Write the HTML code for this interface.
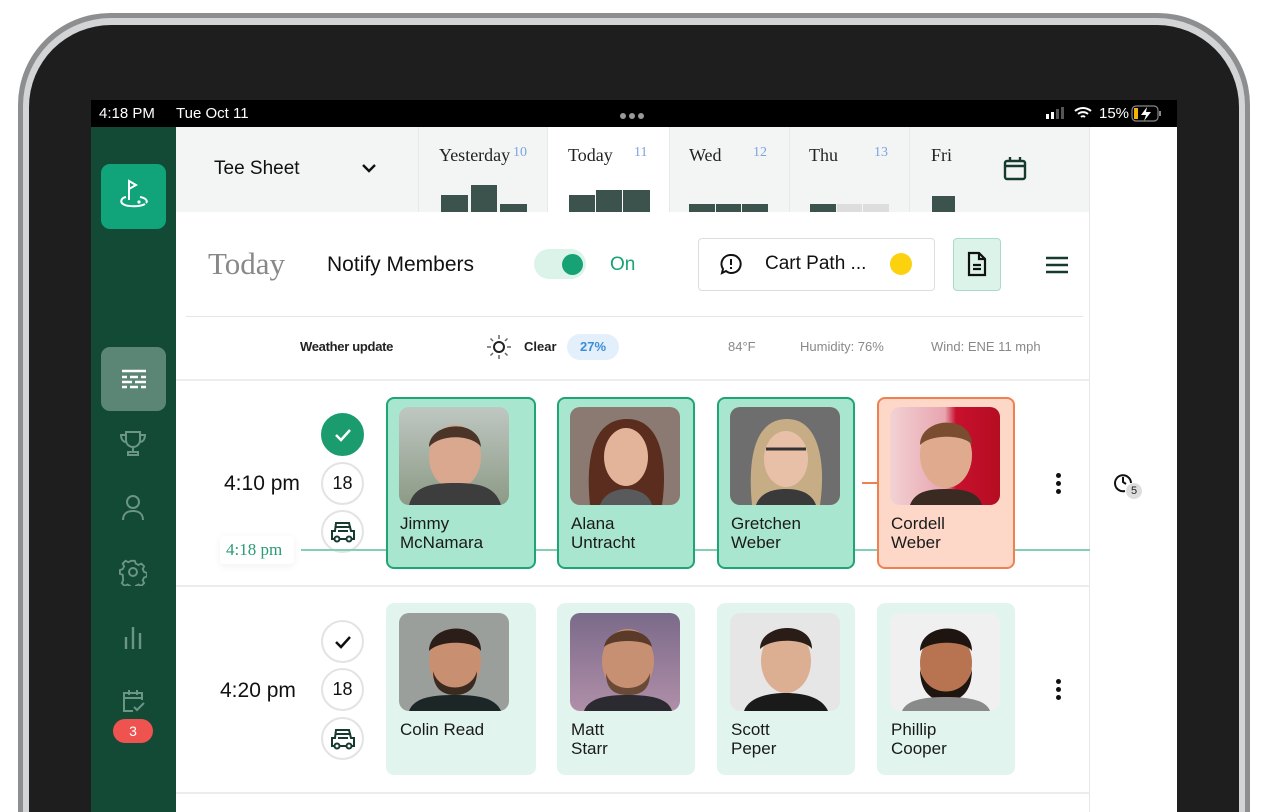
<!DOCTYPE html>
<html style="overflow:hidden;width:1262px;height:812px"><head><meta charset="utf-8">
<style>
*{margin:0;padding:0;box-sizing:border-box}
body{width:1262px;height:812px;overflow:hidden;background:#fff;font-family:"Liberation Sans",sans-serif;position:relative}
#wrap{position:absolute;left:0;top:0;width:1262px;height:812px;overflow:hidden}
.a{position:absolute}
.serif{font-family:"Liberation Serif",serif}
.tab{position:absolute;top:127px;height:85px;border-right:1px solid #e6e9e8}
.tab .n{position:absolute;top:18px;font-family:"Liberation Serif",serif;font-size:18px;color:#222}
.tab .d{position:absolute;top:18px;font-family:"Liberation Serif",serif;font-size:14px;color:#7aa6e0}
.bar{position:absolute;bottom:0;background:#3b524d}
.circ{position:absolute;width:43px;height:43px;border-radius:50%;border:2px solid #e3e3e3;background:#fff;display:flex;align-items:center;justify-content:center;font-size:18px;color:#111}
.card{position:absolute;border-radius:8px}
.g1{background:#a9e6cf;border:2px solid #1fa474}
.g2{background:#e1f5ee;border:2px solid #e1f5ee}
.o1{background:#fdd8c8;border:2px solid #ef8150}
.ph{position:absolute;left:11px;top:8px;width:110px;height:98px;border-radius:10px;overflow:hidden}
.nm{position:absolute;left:12px;top:115px;font-size:17px;line-height:19px;color:#1a1a1a}
.time{position:absolute;font-size:21px;color:#111}
.dots{position:absolute;width:4px}
.dots i{display:block;width:5px;height:5px;border-radius:50%;background:#111;margin-bottom:3px}
</style></head><body><div id="wrap">
<div class="a" style="left:18px;top:13px;width:1232px;height:799px;border-radius:92px 92px 0 0;background:#8d8e90"></div>
<div class="a" style="left:23px;top:18px;width:1222px;height:794px;border-radius:88px 88px 0 0;background:#d3d4d6"></div>
<div class="a" style="left:29px;top:25px;width:1210px;height:787px;border-radius:82px 82px 0 0;background:#1e1e1e"></div>
<div class="a" style="left:91px;top:100px;width:1086px;height:712px;background:#fff;overflow:hidden">
 <div class="a" style="left:0;top:0;width:1086px;height:27px;background:#000;color:#fff;font-size:15px">
  <span class="a" style="left:8px;top:5px">4:18 PM</span><span class="a" style="left:85px;top:5px">Tue Oct 11</span>
  <span class="a" style="left:529px;top:13px;width:24px;height:6px;display:flex;gap:3px"><i style="width:6px;height:6px;border-radius:50%;background:#999"></i><i style="width:6px;height:6px;border-radius:50%;background:#999"></i><i style="width:6px;height:6px;border-radius:50%;background:#999"></i></span>
  <svg class="a" style="left:955px;top:7px" width="20" height="12"><rect x="0" y="7" width="3" height="5" fill="#fff"/><rect x="5" y="5" width="3" height="7" fill="#fff"/><rect x="10" y="2" width="3" height="10" fill="#555"/><rect x="15" y="0" width="3" height="12" fill="#555"/></svg>
  <svg class="a" style="left:983px;top:6px" width="18" height="14"><path d="M1 5a12 12 0 0 1 16 0M4 8a7.5 7.5 0 0 1 10 0M7 11a3 3 0 0 1 4 0" stroke="#fff" stroke-width="2" fill="none"/></svg>
  <span class="a" style="left:1008px;top:5px">15%</span>
  <svg class="a" style="left:1040px;top:5px" width="30" height="17"><rect x="1" y="1" width="26" height="15" rx="4" fill="none" stroke="#888" stroke-width="1.2"/><rect x="3" y="3" width="4" height="11" fill="#f4b400"/><path d="M16 2l-6 8h5l-2 6 7-9h-5z" fill="#fff"/><rect x="28" y="6" width="2" height="5" fill="#888"/></svg>
 </div>
</div>
<div class="a" style="left:91px;top:127px;width:85px;height:685px;background:#134a36"></div>
<div class="a" style="left:101px;top:164px;width:65px;height:65px;border-radius:9px;background:#11a47a"></div>
<svg class="a" style="left:118px;top:178px" width="32" height="36" fill="none" stroke="#fff" stroke-width="2"><path d="M11 22V3l7 4-7 4"/><path d="M22 19c6 1 8 4 6 6M8 19c-5 1-6 5-3 7 4 3 17 3 22 0"/><circle cx="21" cy="24" r="1.6" fill="#fff" stroke="none"/></svg>
<div class="a" style="left:101px;top:347px;width:65px;height:64px;border-radius:9px;background:#5b8676"></div>
<svg class="a" style="left:122px;top:369px" width="24" height="20" stroke="#fff" stroke-width="2.4"><path d="M0 2h24M0 8h5M8 8h8M19 8h5M0 13h10M13 13h11M0 18h5M8 18h8M19 18h5"/></svg>
<svg class="a" style="left:118px;top:428px" width="30" height="30" fill="none" stroke="#6b9585" stroke-width="2"><path d="M8 4h14v8a7 7 0 0 1-14 0zM8 7H3c0 5 3 7 5 7M22 7h5c0 5-3 7-5 7M15 19v5M10 27h10v-3H10z"/></svg>
<svg class="a" style="left:121px;top:494px" width="24" height="28" fill="none" stroke="#6b9585" stroke-width="2"><circle cx="12" cy="8" r="6"/><path d="M2 26c0-6 4-9 10-9s10 3 10 9"/></svg>
<svg class="a" style="left:119px;top:558px" width="28" height="28" fill="none" stroke="#6b9585" stroke-width="2"><circle cx="14" cy="14" r="4"/><path d="M12 2h4l1 3 3 1.5 3-1.5 3 3-1.5 3 1.5 3 3 1v4l-3 1-1.5 3 1.5 3-3 3-3-1.5-3 1.5-1 3h-4l-1-3-3-1.5-3 1.5-3-3 1.5-3L3 17l-3-1v-4l3-1 1.5-3L3 5l3-3 3 1.5L12 2z" transform="scale(.93) translate(1 1)"/></svg>
<svg class="a" style="left:123px;top:625px" width="20" height="24" stroke="#6b9585" stroke-width="2.4"><path d="M3 12v12M10 2v22M17 8v16"/></svg>
<svg class="a" style="left:121px;top:688px" width="26" height="26" fill="none" stroke="#6b9585" stroke-width="2"><path d="M12 23H3V5h18v7M3 10h18M8 2v5M16 2v5M13 19l3 3 7-7"/></svg>
<div class="a" style="left:113px;top:719px;width:40px;height:24px;border-radius:12px;background:#ef5350;color:#fff;font-size:14px;text-align:center;line-height:24px">3</div>
<div class="a" style="left:176px;top:127px;width:914px;height:85px;background:#f3f5f4"></div>
<div class="a" style="left:214px;top:158px;font-size:19px;color:#111">Tee Sheet</div>
<svg class="a" style="left:361px;top:163px" width="16" height="12" fill="none" stroke="#111" stroke-width="2.4"><path d="M2 2l6 6 6-6"/></svg>
<div class="tab" style="left:418px;width:130px;border-left:1px solid #e6e9e8"><span class="n" style="left:20px">Yesterday</span><span class="d" style="left:94px">10</span>
 <div class="bar" style="left:22px;width:27px;height:17px"></div><div class="bar" style="left:52px;width:26px;height:27px"></div><div class="bar" style="left:81px;width:27px;height:8px"></div></div>
<div class="tab" style="left:548px;width:122px;background:#fff"><span class="n" style="left:20px">Today</span><span class="d" style="left:86px">11</span>
 <div class="bar" style="left:21px;width:26px;height:17px"></div><div class="bar" style="left:48px;width:26px;height:22px"></div><div class="bar" style="left:75px;width:27px;height:22px"></div></div>
<div class="tab" style="left:670px;width:120px"><span class="n" style="left:19px">Wed</span><span class="d" style="left:83px">12</span>
 <div class="bar" style="left:19px;width:26px;height:8px"></div><div class="bar" style="left:46px;width:25px;height:8px"></div><div class="bar" style="left:72px;width:26px;height:8px"></div></div>
<div class="tab" style="left:790px;width:120px"><span class="n" style="left:19px">Thu</span><span class="d" style="left:84px">13</span>
 <div class="bar" style="left:20px;width:26px;height:8px"></div><div class="bar" style="left:47px;width:25px;height:8px;background:#ddd"></div><div class="bar" style="left:73px;width:26px;height:8px;background:#ddd"></div></div>
<div class="a" style="left:931px;top:145px;font-family:'Liberation Serif',serif;font-size:18px;color:#222">Fri</div>
<div class="a" style="left:932px;top:196px;width:23px;height:16px;background:#3b524d"></div>
<svg class="a" style="left:1003px;top:156px" width="24" height="26" fill="none" stroke="#173a30" stroke-width="2.4"><rect x="2" y="5" width="20" height="18" rx="2"/><path d="M2 10h20M7 1v5M17 1v5"/></svg>
<div class="a" style="left:1089px;top:127px;width:1px;height:685px;background:#e6e8e7"></div>
<div class="a serif" style="left:208px;top:246px;font-size:31px;color:#888">Today</div>
<div class="a" style="left:327px;top:253px;font-size:21px;color:#111">Notify Members</div>
<div class="a" style="left:534px;top:249px;width:52px;height:30px;border-radius:15px;background:#dcf3ea"></div>
<div class="a" style="left:562px;top:254px;width:21px;height:21px;border-radius:50%;background:#17a275"></div>
<div class="a" style="left:610px;top:254px;font-size:19px;color:#17a275">On</div>
<div class="a" style="left:698px;top:238px;width:237px;height:53px;border:1px solid #ddd;border-radius:4px;background:#fff"></div>
<svg class="a" style="left:720px;top:253px" width="22" height="22" fill="none" stroke="#111" stroke-width="2"><path d="M11 2a9 9 0 1 1-5 16l-4 2 1-4A9 9 0 0 1 11 2z"/><path d="M11 6v6M11 14v2"/></svg>
<div class="a" style="left:765px;top:253px;font-size:19px;color:#111">Cart Path ...</div>
<div class="a" style="left:890px;top:253px;width:22px;height:22px;border-radius:50%;background:#fcd20f"></div>
<div class="a" style="left:953px;top:238px;width:48px;height:53px;border:1px solid #a9dcc8;border-radius:4px;background:#dcf3ea"></div>
<svg class="a" style="left:966px;top:251px" width="22" height="26" fill="none" stroke="#111" stroke-width="2.2"><path d="M3 2h10l6 6v16H3z M13 2v6h6M7 14h8M7 18h8"/></svg>
<svg class="a" style="left:1045px;top:255px" width="24" height="20" stroke="#173a30" stroke-width="2.6"><path d="M1 3h22M1 10h22M1 17h22"/></svg>
<div class="a" style="left:186px;top:316px;width:897px;height:1px;background:#e6e6e6"></div>
<div class="a" style="left:300px;top:339px;font-size:13px;font-weight:bold;color:#222;letter-spacing:-.3px">Weather update</div>
<svg class="a" style="left:486px;top:334px" width="26" height="26" fill="none" stroke="#222" stroke-width="2"><circle cx="13" cy="13" r="5"/><path d="M13 1v4M13 21v4M1 13h4M21 13h4M4.5 4.5l2.5 2.5M19 19l2.5 2.5M4.5 21.5L7 19M19 7l2.5-2.5" stroke-width="1.5" stroke="#666"/></svg>
<div class="a" style="left:524px;top:339px;font-size:13px;font-weight:bold;color:#222">Clear</div>
<div class="a" style="left:567px;top:334px;width:52px;height:26px;border-radius:13px;background:#e3f0fb;color:#3b8ed8;font-size:13px;font-weight:bold;text-align:center;line-height:26px">27%</div>
<div class="a" style="left:728px;top:339px;font-size:13px;color:#888">84°F</div>
<div class="a" style="left:800px;top:339px;font-size:13px;color:#888">Humidity: 76%</div>
<div class="a" style="left:931px;top:339px;font-size:13px;color:#888">Wind: ENE 11 mph</div>
<div class="a" style="left:176px;top:379px;width:914px;height:2px;background:#ececec"></div>
<div class="a" style="left:176px;top:585px;width:914px;height:2px;background:#ececec"></div>
<div class="a" style="left:176px;top:792px;width:914px;height:2px;background:#ececec"></div>
<div class="time" style="left:224px;top:472px">4:10 pm</div>
<div class="circ" style="left:321px;top:413px;background:#1a9c6f;border-color:#1a9c6f"><svg width="18" height="14" fill="none" stroke="#fff" stroke-width="2.5"><path d="M2 7l5 5 9-10"/></svg></div>
<div class="circ" style="left:321px;top:462px">18</div>
<div class="circ" style="left:321px;top:510px"><svg width="26" height="22" fill="none" stroke="#173a30" stroke-width="2"><path d="M6 2h13l2 8h3v8H2v-8h3zM8 10h10M5 6h16"/><circle cx="7" cy="18" r="2.5" fill="#fff"/><circle cx="19" cy="18" r="2.5" fill="#fff"/></svg></div>
<div class="a" style="left:301px;top:549px;width:789px;height:2px;background:#82cfb1"></div>
<div class="a" style="left:220px;top:536px;width:74px;height:28px;background:#fff;border-radius:4px;box-shadow:0 2px 8px rgba(0,0,0,.06)"></div>
<div class="a serif" style="left:226px;top:540px;font-size:17px;color:#2a9c74">4:18 pm</div>
<div class="a" style="left:862px;top:482px;width:15px;height:2px;background:#ef8150"></div>
<div class="time" style="left:220px;top:679px">4:20 pm</div>
<div class="circ" style="left:321px;top:620px"><svg width="18" height="14" fill="none" stroke="#111" stroke-width="2.5"><path d="M2 7l5 5 9-10"/></svg></div>
<div class="circ" style="left:321px;top:668px">18</div>
<div class="circ" style="left:321px;top:717px"><svg width="26" height="22" fill="none" stroke="#173a30" stroke-width="2"><path d="M6 2h13l2 8h3v8H2v-8h3zM8 10h10M5 6h16"/><circle cx="7" cy="18" r="2.5" fill="#fff"/><circle cx="19" cy="18" r="2.5" fill="#fff"/></svg></div>
<div class="card g1" style="left:386px;top:397px;width:150px;height:172px"><div class="ph" style="background:linear-gradient(#bfc7c2,#8c9a85)"><svg width="110" height="98"><ellipse cx="56" cy="50" rx="26" ry="32" fill="#d9a88e"/><path d="M30 40c0-25 50-30 52 0c-8-12-40-14-52 0z" fill="#4a3528"/><path d="M10 98c5-20 25-22 46-22s40 2 46 22z" fill="#3d3d3d"/></svg></div><div class="nm">Jimmy<br>McNamara</div></div>
<div class="card g1" style="left:557px;top:397px;width:138px;height:172px"><div class="ph" style="background:#8a7a72"><svg width="110" height="98"><path d="M20 98c-4-40 0-85 36-86s42 46 36 86z" fill="#5a2d1e"/><ellipse cx="56" cy="50" rx="22" ry="29" fill="#e3b49a"/><path d="M30 98c5-14 20-16 26-16s22 2 26 16z" fill="#585a5c"/></svg></div><div class="nm">Alana<br>Untracht</div></div>
<div class="card g1" style="left:717px;top:397px;width:138px;height:172px"><div class="ph" style="background:#6e6e6e"><svg width="110" height="98"><path d="M22 98c-4-40 0-85 34-86s40 46 34 86z" fill="#c7ad85"/><ellipse cx="56" cy="52" rx="22" ry="28" fill="#e8c0a8"/><path d="M36 42h40" stroke="#333" stroke-width="3"/><path d="M26 98c5-14 20-16 30-16s25 2 30 16z" fill="#3a3a3a"/></svg></div><div class="nm">Gretchen<br>Weber</div></div>
<div class="card o1" style="left:877px;top:397px;width:138px;height:172px"><div class="ph" style="background:linear-gradient(90deg,#f2d2d4 0,#e8a5b0 50%,#c8102e 60%,#b50d22)"><svg width="110" height="98"><ellipse cx="56" cy="48" rx="26" ry="33" fill="#e0aa8e"/><path d="M30 38c0-28 52-32 52 0c-6-10-40-12-52 0z" fill="#7a4c30"/><path d="M20 98c5-14 20-16 36-16s32 2 36 16z" fill="#3a2a22"/></svg></div><div class="nm">Cordell<br>Weber</div></div>
<div class="card g2" style="left:386px;top:603px;width:150px;height:172px"><div class="ph" style="background:#9a9f9c"><svg width="110" height="98"><ellipse cx="56" cy="48" rx="26" ry="32" fill="#c89070"/><path d="M30 38c0-28 52-32 52 0c-6-10-40-12-52 0z" fill="#2b1e18"/><path d="M34 58c6 22 38 22 44 0c0 18-10 24-22 24s-22-6-22-24z" fill="#3a2a20"/><path d="M10 98c5-14 25-16 46-16s40 2 46 16z" fill="#1c2626"/></svg></div><div class="nm">Colin Read</div></div>
<div class="card g2" style="left:557px;top:603px;width:138px;height:172px"><div class="ph" style="background:linear-gradient(#7a6a8a,#b08fa8)"><svg width="110" height="98"><ellipse cx="58" cy="48" rx="26" ry="32" fill="#c89072"/><path d="M34 34c4-22 44-22 48 0c-8-8-40-8-48 0z" fill="#5a3a28"/><path d="M36 60c6 20 38 20 44 0c0 18-10 22-22 22s-22-4-22-22z" fill="#6a4a36"/><path d="M14 98c5-14 25-16 44-16s40 2 44 16z" fill="#2a2a30"/></svg></div><div class="nm">Matt<br>Starr</div></div>
<div class="card g2" style="left:717px;top:603px;width:138px;height:172px"><div class="ph" style="background:#e6e6e6"><svg width="110" height="98"><ellipse cx="56" cy="48" rx="25" ry="32" fill="#dcae92"/><path d="M30 36c0-26 52-30 52 0c-6-10-40-12-52 0z" fill="#2a1c16"/><path d="M14 98c5-14 25-18 42-18s36 4 42 18z" fill="#1a1a1a"/></svg></div><div class="nm">Scott<br>Peper</div></div>
<div class="card g2" style="left:877px;top:603px;width:138px;height:172px"><div class="ph" style="background:#f0f0f0"><svg width="110" height="98"><ellipse cx="56" cy="50" rx="26" ry="32" fill="#b87450"/><path d="M30 38c0-28 52-32 52 0c-6-10-40-12-52 0z" fill="#1e1410"/><path d="M30 56c6 30 46 30 52 0c0 24-12 32-26 32s-26-8-26-32z" fill="#1e1410"/><path d="M12 98c5-12 25-14 44-14s40 2 44 14z" fill="#8a8a8a"/></svg></div><div class="nm">Phillip<br>Cooper</div></div>
<div class="dots" style="left:1056px;top:473px"><i></i><i></i><i></i></div>
<div class="dots" style="left:1056px;top:679px"><i></i><i></i><i></i></div>
<svg class="a" style="left:1113px;top:471px" width="22" height="22" fill="none" stroke="#111" stroke-width="2"><path d="M18 12a8 8 0 1 0-6 8M10 6v5l3 2"/></svg>
<div class="a" style="left:1126px;top:483px;width:16px;height:16px;border-radius:50%;background:#ddd;font-size:11px;text-align:center;line-height:16px;color:#222">5</div>
</div></body></html>
